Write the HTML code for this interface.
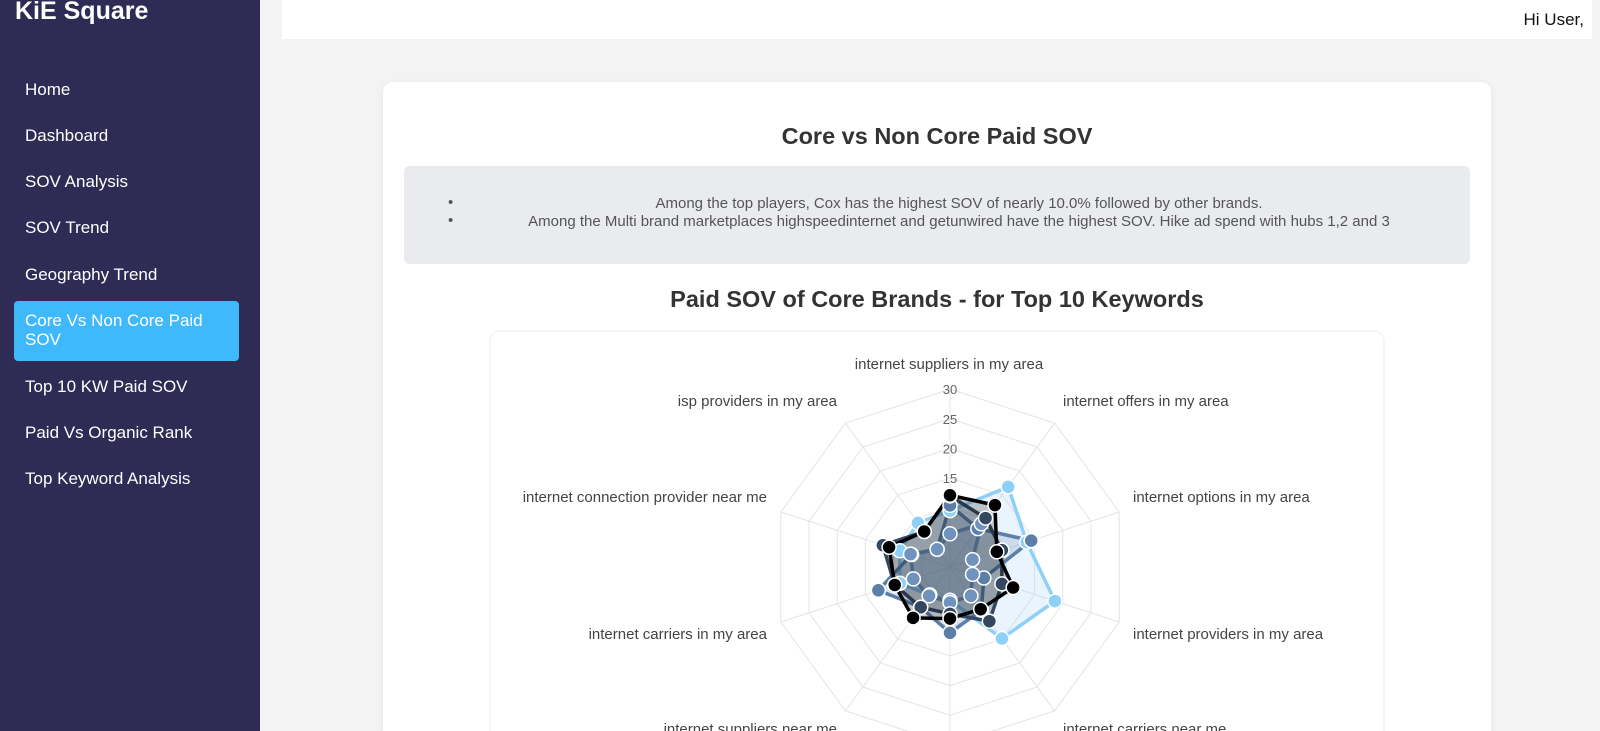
<!DOCTYPE html>
<html><head><meta charset="utf-8"><style>
*{margin:0;padding:0;box-sizing:border-box}
html,body{width:1600px;height:731px;overflow:hidden}
body{background:#f3f3f3;font-family:"Liberation Sans",Arial,sans-serif;position:relative}
.side{position:absolute;left:0;top:0;width:260px;height:731px;background:#2e2b55;color:#fff}
.logo{position:absolute;left:15px;top:-3px;font-size:25px;font-weight:bold}
.item{position:absolute;left:25px;font-size:17px;color:#fff;line-height:20px}
.active{position:absolute;left:14px;top:301px;width:225px;height:60px;background:#40b9fc;border-radius:4px}
.hdr{position:absolute;left:282px;top:0;width:1310px;height:39px;background:#fff}
.hi{position:absolute;right:8px;top:10px;font-size:17px;color:#111}
.card{position:absolute;left:383px;top:82px;width:1108px;height:649px;background:#fff;border-radius:10px 10px 0 0;box-shadow:0 2px 8px rgba(0,0,0,.06);overflow:hidden}
h1{position:absolute;left:0;width:100%;text-align:center;font-size:23.5px;color:#333;font-weight:bold}
.gbox{position:absolute;left:21px;top:84px;width:1066px;height:98px;background:#e9ebee;border-radius:6px;font-size:15px;color:#555}
.gbox div{position:absolute;left:44px;right:0;text-align:center}
.gbox span{position:absolute;left:44px}
</style></head><body>
<div class="side">
<div class="logo">KiE Square</div>
<div class="item" style="top:80px">Home</div>
<div class="item" style="top:126px">Dashboard</div>
<div class="item" style="top:172px">SOV Analysis</div>
<div class="item" style="top:218px">SOV Trend</div>
<div class="item" style="top:265px">Geography Trend</div>
<div class="active"></div>
<div class="item" style="top:311px;width:210px;line-height:19px">Core Vs Non Core Paid SOV</div>
<div class="item" style="top:377px">Top 10 KW Paid SOV</div>
<div class="item" style="top:423px">Paid Vs Organic Rank</div>
<div class="item" style="top:469px">Top Keyword Analysis</div>
</div>
<div class="hdr"><div class="hi">Hi User,</div></div>
<div class="card">
<h1 style="top:41px">Core vs Non Core Paid SOV</h1>
<div class="gbox">
<span style="top:28px">•</span><div style="top:29px">Among the top players, Cox has the highest SOV of nearly 10.0% followed by other brands.</div>
<span style="top:46px">•</span><div style="top:47px">Among the Multi brand marketplaces highspeedinternet and getunwired have the highest SOV. Hike ad spend with hubs 1,2 and 3</div>
</div>
<h1 style="top:204px">Paid SOV of Core Brands - for Top 10 Keywords</h1>
</div>
<svg id="r" width="1600" height="731" style="position:absolute;left:0;top:0;overflow:hidden" font-family="Liberation Sans, Arial, sans-serif"></svg>
<script>
var cx=950,cy=567,u=5.93,s='';
function pt(i,v){var a=i*Math.PI/5;return [cx+v*u*Math.sin(a),cy-v*u*Math.cos(a)];}
s+='<rect x="490" y="331" width="894" height="420" rx="10" fill="#fff" stroke="#eee"/>';
for(var k=1;k<=6;k++){var p=[];for(var i=0;i<10;i++)p.push(pt(i,k*5).join(','));s+='<polygon points="'+p.join(' ')+'" fill="none" stroke="#e4e4e4"/>';}
for(var i=0;i<10;i++){var q=pt(i,30);s+='<line x1="'+cx+'" y1="'+cy+'" x2="'+q[0]+'" y2="'+q[1]+'" stroke="#e4e4e4"/>';}
[15,20,25,30].forEach(function(v){s+='<text x="'+cx+'" y="'+(cy-v*u+5)+'" font-size="13" fill="#666" text-anchor="middle">'+v+'</text>';});
var D=[
 {v:[9.5,16.7,13.6,18.6,14.9,5.6,5.8,8.9,8.9,9.2],c:'#8ed0f8',f:'rgba(144,202,249,0.2)'},
 {v:[10.4,8,14.4,6,9,11.1,8.4,12.7,6.8,3.7],c:'#5b7fa8',f:'rgba(91,127,168,0.2)'},
 {v:[5.6,9,4,4,6,6,6,6.5,7,3.7],c:'#6f93bd',f:'rgba(111,147,189,0.2)'},
 {v:[12,10.2,9.2,9.2,11.3,7.9,8.4,9.8,11.9,7.4],c:'#33475f',f:'rgba(51,71,95,0.25)'},
 {v:[12.1,12.9,8.3,11.2,8.8,8.7,10.6,9.8,10.8,7.4],c:'#000',f:'rgba(0,0,0,0.2)'}];
D.forEach(function(d){var p=d.v.map(function(v,i){return pt(i,v).join(',')});
 s+='<polygon points="'+p.join(' ')+'" fill="'+d.f+'" stroke="'+d.c+'" stroke-width="3.5" stroke-linejoin="round"/>';});
D.forEach(function(d){d.v.forEach(function(v,i){var q=pt(i,v);s+='<circle cx="'+q[0]+'" cy="'+q[1]+'" r="7" fill="'+d.c+'" stroke="#fff" stroke-width="1.5"/>';});});
var L=[[949,364,'middle','internet suppliers in my area'],[1063,401,'start','internet offers in my area'],[1133,497,'start','internet options in my area'],[1133,634,'start','internet providers in my area'],[1063,729,'start','internet carriers near me'],[837,729,'end','internet suppliers near me'],[767,634,'end','internet carriers in my area'],[767,497,'end','internet connection provider near me'],[837,401,'end','isp providers in my area']];
L.forEach(function(l){s+='<text x="'+l[0]+'" y="'+(l[1]+5)+'" font-size="15" fill="#444" text-anchor="'+l[2]+'">'+l[3]+'</text>';});
document.getElementById('r').innerHTML=s;
</script>
</body></html>
